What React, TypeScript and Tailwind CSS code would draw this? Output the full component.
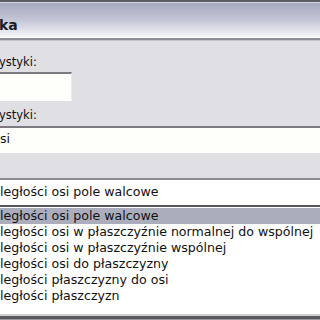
import React from 'react';

const items = [
  'ległości osi pole walcowe',
  'ległości osi w płaszczyźnie normalnej do wspólnej',
  'ległości osi w płaszczyźnie wspólnej',
  'ległości osi do płaszczyzny',
  'ległości płaszczyzny do osi',
  'ległości płaszczyzn',
];

export default function App() {
  return (
    <div
      className="w-[320px] h-[320px] overflow-hidden bg-[#e0dfe3] text-[#111] flex flex-col"
      style={{ fontFamily: '"DejaVu Sans", "Liberation Sans", sans-serif' }}
    >
      {/* title bar */}
      <div className="h-[2px] bg-[#5c5c64]" />
      <div className="h-[1px] bg-[#d4d5e0]" />
      <div className="h-[34px] bg-gradient-to-b from-[#a6a8c0] via-[#c4c6d6] to-[#f6f7fa] flex items-end pb-[5px]">
        <span className="text-[14px] font-bold leading-none -ml-[1px] text-[#1a1a22]">ka</span>
      </div>
      <div className="h-[1px] bg-white" />
      <div className="h-[2px] bg-[#8c8c94]" />
      <div className="h-[1px] bg-[#c4c4ca]" />

      {/* first field */}
      <div className="h-[31px] flex items-end pb-[4px] text-[11.5px] leading-none -ml-[1px]">ystyki:</div>
      <div className="w-[72px] h-[29px] bg-[#fefefa] border-t-2 border-t-[#7a7a80] border-r border-r-[#ececee]" />

      {/* second field */}
      <div className="h-[25px] flex items-end pb-[5px] text-[11.5px] leading-none -ml-[1px]">ystyki:</div>
      <div className="h-[27px] bg-[#fefefa] border-t-2 border-t-[#7a7a80] flex items-center text-[12.6px] leading-none pb-[2px]">si</div>

      <div className="h-[25px]" />

      {/* combo */}
      <div className="h-[27px] bg-white border-t-2 border-t-[#8a8a90] flex items-center text-[12.6px] leading-none">
        ległości osi pole walcowe
      </div>

      {/* dropdown list */}
      <div className="bg-white border-t-2 border-t-[#55555c] flex flex-col pt-[1px] h-[109px]">
        {items.map((t, i) => (
          <div
            key={t}
            className={`h-[16px] flex items-center text-[12.6px] leading-none whitespace-nowrap ${i === 0 ? 'bg-[#abadbd]' : ''}`}
          >
            {t}
          </div>
        ))}
      </div>
      <div className="h-[2px] bg-[#d0d0d4]" />
      <div className="h-[3px] bg-[#5a5a5e]" />
      <div className="flex-1 bg-[#9a9aa0]" />
    </div>
  );
}
